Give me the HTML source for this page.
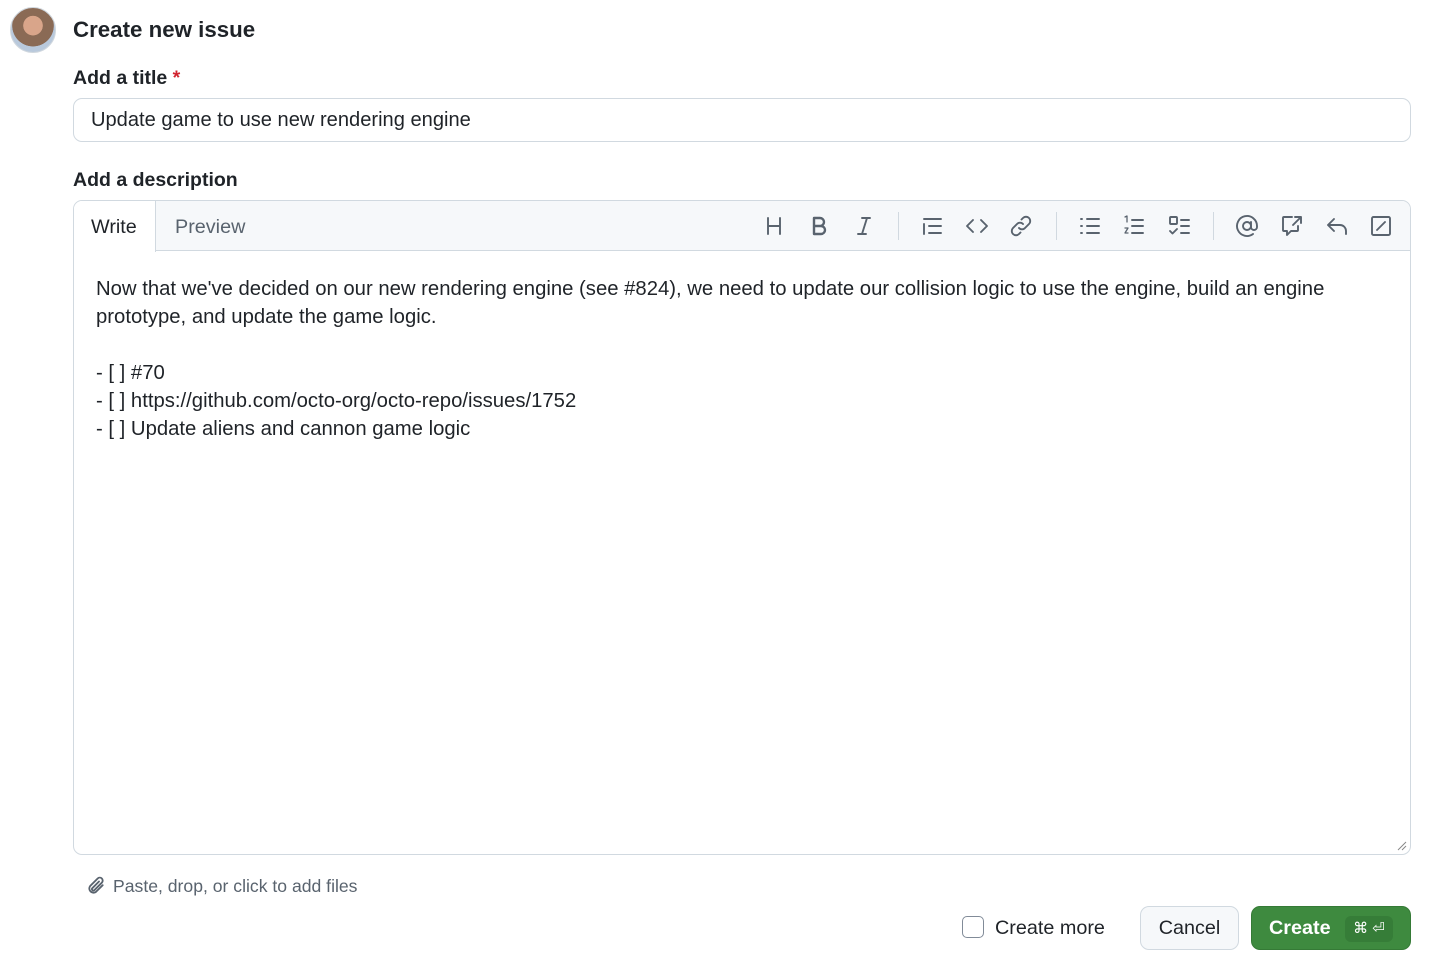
<!DOCTYPE html>
<html><head><style>
*{box-sizing:border-box;margin:0;padding:0}
body{width:1440px;height:967px;background:#fff;font-family:"Liberation Sans",sans-serif;color:#1f2328;position:relative;overflow:hidden}
.abs{position:absolute}
.ic{position:absolute;top:214px;width:24px;height:24px}
.ic svg{width:24px;height:24px;fill:none;stroke:#59636e;stroke-width:1.9;stroke-linecap:round;stroke-linejoin:round}
.sep{position:absolute;top:212px;width:1px;height:28px;background:#d1d9e0}
</style></head><body>
<div class="abs" style="left:10px;top:7px;width:46px;height:46px;border-radius:50%;background:radial-gradient(circle at 50% 40%,#d9a58a 0 28%,#8a6a55 29% 60%,#b9c9dc 61%);border:1px solid #d0d7de"></div>
<div class="abs" style="left:73px;top:17px;font-size:22.3px;font-weight:bold">Create new issue</div>
<div class="abs" style="left:73px;top:67px;font-size:19.5px;font-weight:bold">Add a title <span style="color:#d1242f">*</span></div>
<div class="abs" style="left:73px;top:98px;width:1338px;height:44px;border:1.5px solid #d1d9e0;border-radius:9px;font-size:20.1px;padding:10px 0 0 17px">Update game to use new rendering engine</div>
<div class="abs" style="left:73px;top:169px;font-size:19.5px;font-weight:bold">Add a description</div>
<div class="abs" style="left:73px;top:200px;width:1338px;height:655px;border:1.5px solid #d1d9e0;border-radius:9px;overflow:hidden">
 <div style="height:50px;background:#f6f8fa;border-bottom:1.5px solid #d1d9e0"></div>
 <div class="abs" style="left:0;top:0;width:82px;height:51px;background:#fff;border-right:1.5px solid #d1d9e0;font-size:19.8px;padding:15px 0 0 17px">Write</div>
 <div class="abs" style="left:101px;top:15px;font-size:19.8px;color:#59636e">Preview</div>
 <div class="abs" style="left:22px;top:74px;width:1290px;font-size:20.3px;line-height:28px;white-space:pre-wrap">Now that we've decided on our new rendering engine (see #824), we need to update our collision logic to use the engine, build an engine prototype, and update the game logic.

- [ ] #70
- [ ] https://github.com/octo-org/octo-repo/issues/1752
- [ ] Update aliens and cannon game logic</div>
 <svg class="abs" style="right:3px;bottom:3px" width="10" height="10"><path d="M9 1L1 9M9 5L5 9" stroke="#888" stroke-width="1"/></svg>
</div>
<div class="ic" style="left:762px"><svg viewBox="0 0 24 24"><path d="M6 4v16M18 4v16M6 12h12"/></svg></div>
<div class="ic" style="left:807px"><svg viewBox="0 0 24 24" style="stroke-width:2.4"><path d="M7 4h6a4 4 0 010 8H7zM7 12h7a4 4 0 010 8H7z"/></svg></div>
<div class="ic" style="left:852px"><svg viewBox="0 0 24 24"><path d="M10 4h8M6 20h8M15 4L10 20"/></svg></div>
<div class="sep" style="left:898px"></div>
<div class="ic" style="left:920px"><svg viewBox="0 0 24 24"><path d="M4 5h17M9 12h12M9 19h12M4 10v10"/></svg></div>
<div class="ic" style="left:965px"><svg viewBox="0 0 24 24"><path d="M8 6l-6 6 6 6M16 6l6 6-6 6"/></svg></div>
<div class="ic" style="left:1009px"><svg viewBox="0 0 24 24"><path d="M10 14a4 4 0 006 0l4-4a4 4 0 00-6-6l-1.5 1.5M14 10a4 4 0 00-6 0l-4 4a4 4 0 006 6l1.5-1.5"/></svg></div>
<div class="sep" style="left:1056px"></div>
<div class="ic" style="left:1078px"><svg viewBox="0 0 24 24"><path d="M9 5h12M9 12h12M9 19h12M3 5h1M3 12h1M3 19h1"/></svg></div>
<div class="ic" style="left:1122px"><svg viewBox="0 0 24 24"><path d="M10 6h11M10 12h11M10 19h11"/><path d="M3 3l2-1v6M3 14h3l-3 5h3" style="stroke-width:1.3"/></svg></div>
<div class="ic" style="left:1168px"><svg viewBox="0 0 24 24"><rect x="2" y="3" width="7" height="7" rx="1"/><path d="M13 6h8M13 12h8M13 19h8M2 17l2.5 2.5L9 15"/></svg></div>
<div class="sep" style="left:1213px"></div>
<div class="ic" style="left:1235px"><svg viewBox="0 0 24 24"><circle cx="12" cy="12" r="4"/><path d="M16 8v5a3 3 0 006 0v-1a10 10 0 10-4 8"/></svg></div>
<div class="ic" style="left:1280px"><svg viewBox="0 0 24 24"><path d="M12 3H4a1 1 0 00-1 1v12a1 1 0 001 1h3v4l4-4h6a1 1 0 001-1v-4M15 3h6v6M21 3l-8 8"/></svg></div>
<div class="ic" style="left:1325px"><svg viewBox="0 0 24 24"><path d="M9 5L3 11l6 6M3 11h12a6 6 0 016 6v3"/></svg></div>
<div class="ic" style="left:1369px"><svg viewBox="0 0 24 24"><rect x="3" y="3" width="18" height="18" rx="1.5"/><path d="M8 16l8-8"/></svg></div>
<svg class="abs" style="left:86px;top:876px" width="20" height="20" viewBox="0 0 24 24" fill="none" stroke="#59636e" stroke-width="2.2" stroke-linecap="round"><path d="M20 11l-8 8a5 5 0 01-7-7l9-9a3.3 3.3 0 015 5l-9 9a1.7 1.7 0 01-2.4-2.4l8-8"/></svg>
<div class="abs" style="left:113px;top:876px;font-size:17.6px;color:#59636e">Paste, drop, or click to add files</div>
<div class="abs" style="left:962px;top:916px;width:22px;height:22px;border:1.5px solid #818b98;border-radius:5px"></div>
<div class="abs" style="left:995px;top:917px;font-size:19.8px">Create more</div>
<div class="abs" style="left:1140px;top:906px;width:99px;height:44px;border:1.5px solid #d1d9e0;border-radius:9px;background:#f6f8fa;font-size:19.8px;text-align:center;line-height:42px">Cancel</div>
<div class="abs" style="left:1251px;top:906px;width:160px;height:44px;border-radius:9px;background:#3e8a3f;border:1px solid #357a36;color:#fff;font-size:19.8px;font-weight:bold;line-height:42px;padding-left:17px">Create<span style="position:absolute;left:93px;top:9px;width:48px;height:26px;border-radius:6px;background:#367d38;font-size:15px;line-height:26px;text-align:center;font-weight:normal">⌘ ⏎</span></div>
</body></html>
